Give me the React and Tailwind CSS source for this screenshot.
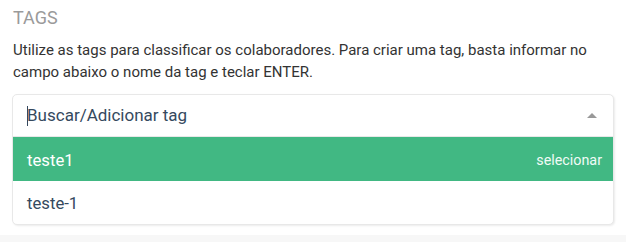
import { useState } from 'react'

const TagSelect = () => {
    const [options] = useState(['teste1', 'teste-1'])
    const [highlighted] = useState(0)

    return (
        <div className="rounded-[5px] border border-[#e8e8e8] bg-white shadow-[1px_1px_2px_rgba(0,0,0,0.08)]">
            {/* Input */}
            <div className="flex h-[42px] items-center justify-between border-b border-[#e8e8e8] pl-[14px] pr-[16px]">
                <div className="flex items-center">
                    <span className="mr-[-1px] h-[20px] w-px bg-[#35495e]" />
                    <span className="text-[17px] text-[#35495e]">Buscar/Adicionar tag</span>
                </div>
                <div className="h-0 w-0 border-x-[5px] border-b-[5px] border-x-transparent border-b-[#999]" />
            </div>

            {/* Options */}
            <div>
                {options.map((tag, i) => (
                    <div
                        key={tag}
                        className={`flex items-center justify-between pl-[14px] pr-[11px] pt-[3px] text-[16.7px] ${i === highlighted ? 'h-[44px] bg-[#41b883] text-white' : 'h-[43px] text-[#35495e]'}`}
                    >
                        <span>{tag}</span>
                        {i === highlighted && (
                            <span className="text-[14.3px] text-[#f0fbf6]">selecionar</span>
                        )}
                    </div>
                ))}
            </div>
        </div>
    )
}

export default function App() {
    return (
        <div className="h-[242px] w-[626px] overflow-hidden bg-white font-['Roboto',sans-serif]">
            <div className="px-[12px] pt-[6px]">
                <h3 className="pl-px text-[18px] leading-[24px] text-[#9a9a9a]">TAGS</h3>
                <p className="mt-[9px] pl-px text-[15px] leading-[22px] text-[#333]">
                    Utilize as tags para classificar os colaboradores. Para criar uma tag, basta informar no
                    <br />
                    campo abaixo o nome da tag e teclar ENTER.
                </p>
                <div className="mt-[11px]">
                    <TagSelect />
                </div>
            </div>
            <div className="mt-[10px] h-[10px] bg-[#f7f7f7]" />
        </div>
    )
}
